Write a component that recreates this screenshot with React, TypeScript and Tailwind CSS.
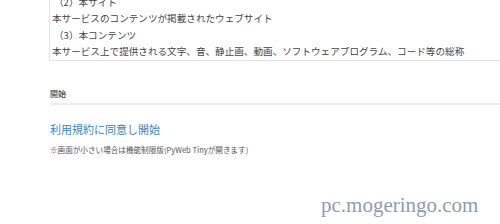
export default function App() {
  return (
    <div
      className="relative w-[500px] h-[224px] overflow-hidden bg-white text-[#333]"
      style={{ fontFamily: '"Noto Sans CJK JP", "Noto Sans", sans-serif' }}
    >
      {/* Terms box (scrolled) */}
      <div className="ml-[49px] -mt-[6px] border-l border-b border-[#e2e2e2] pl-[2px] pb-[1px] text-[9.6px] leading-[16.3px] text-[#444]">
        <p className="pl-[2px]">（2）本サイト</p>
        <p>本サービスのコンテンツが掲載されたウェブサイト</p>
        <p className="pl-[2px]">（3）本コンテンツ</p>
        <p>本サービス上で提供される文字、音、静止画、動画、ソフトウェアプログラム、コード等の総称</p>
      </div>

      <div className="ml-[50px] mt-[26px]">
        <div className="border-b-2 border-[#ececec] pb-[2px] text-[8px] leading-[14px] font-medium text-[#444]">
          開始
        </div>
        <a className="block mt-[16px] text-[11px] leading-[16px] text-[#3b84c4]">
          利用規約に同意し開始
        </a>
        <p className="mt-[7px] text-[7.6px] leading-[12px] text-[#555]">
          ※画面が小さい場合は機能制限版(PyWeb Tinyが開きます)
        </p>
      </div>

      {/* watermark */}
      <div
        className="absolute left-[321px] top-[193px] text-[21px] leading-[24px] text-[#8d9cb0]"
        style={{ fontFamily: '"Liberation Serif", serif' }}
      >
        pc.mogeringo.com
      </div>
    </div>
  )
}
